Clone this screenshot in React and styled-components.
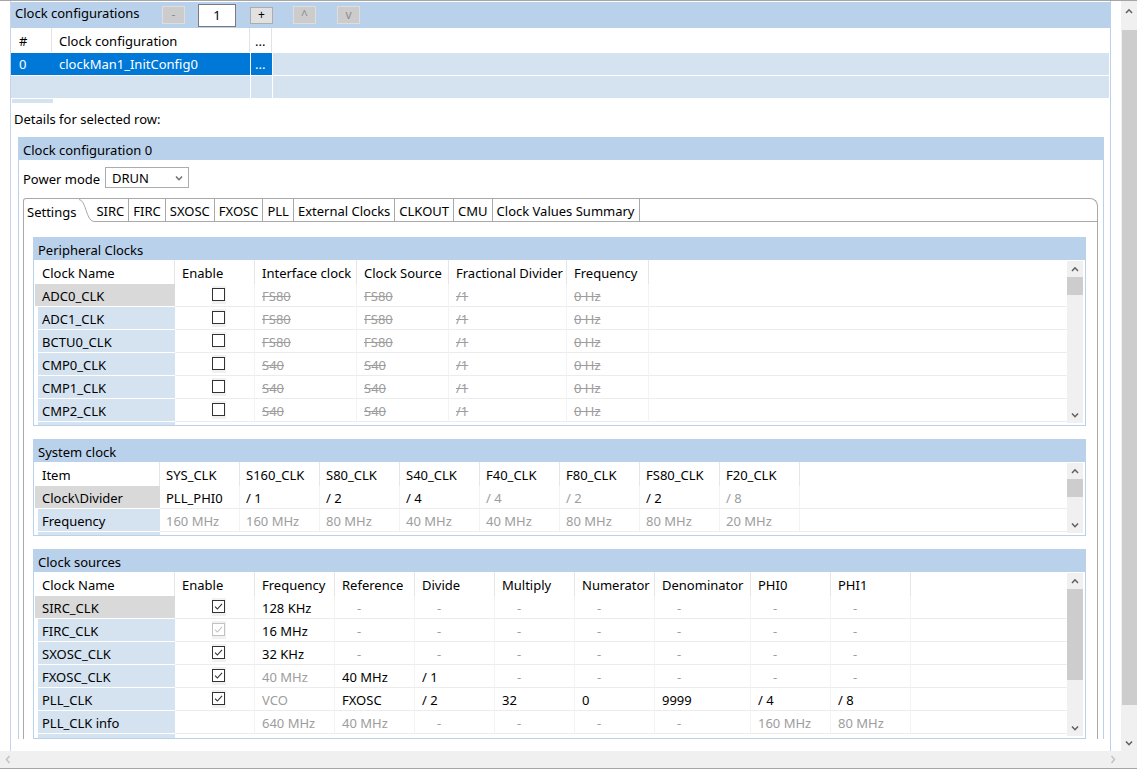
import React from 'react';
import styled, { createGlobalStyle } from 'styled-components';

const BAND = '#b9d1ea';
const ROWBLUE = '#d5e3f1';
const SELGRAY = '#d9d9d9';
const GRAYTXT = '#9d9d9d';
const FRAME = '#a9a9a9';

const GlobalStyle = createGlobalStyle`
  html, body { margin: 0; padding: 0; background: #fff; }
  body {
    font-family: "Noto Sans", "Liberation Sans", Arial, sans-serif;
    font-size: 13px;
    color: #000;
  }
  *, *::before, *::after { box-sizing: border-box; }
`;

const Window = styled.div`
  width: 1137px;
  height: 769px;
  display: grid;
  grid-template-columns: 1121px 16px;
  grid-template-rows: 750px 17px;
  border-top: 1px solid #a5a5a5;
  border-bottom: 1px solid #a5a5a5;
  overflow: hidden;
`;

const Main = styled.div`
  overflow: hidden;
  padding-left: 10px;
`;

const Outer = styled.div`
  width: 1101px;
  min-height: 100%;
  padding-top: 1px;
  border-left: 1px solid #c6d6e8;
  border-right: 1px solid ${BAND};
`;

/* ---- top toolbar ---- */
const HeaderBand = styled.div`
  height: 26px;
  background: ${BAND};
  display: flex;
  align-items: center;
`;

const HeaderTitle = styled.div`
  width: 151px;
  padding-left: 4px;
  align-self: flex-start;
  line-height: 22px;
  white-space: nowrap;
`;

const ToolButton = styled.div`
  width: 23px;
  height: ${p => (p.$off ? 18 : 17)}px;
  margin-left: ${p => p.$ml || 0}px;
  display: flex;
  align-items: center;
  justify-content: center;
  background: ${p => (p.$off ? '#cccccc' : '#e1e1e1')};
  border: 1px solid ${p => (p.$off ? '#dedede' : '#adadad')};
  color: ${p => (p.$off ? '#8c8c8c' : '#000')};
  font-size: 12px;
  line-height: 1;
`;

const CountInput = styled.div`
  width: 38px;
  height: 23px;
  margin-left: 13px;
  background: #fff;
  border: 1px solid #7a7a7a;
  display: flex;
  align-items: center;
  justify-content: center;
`;

/* ---- configuration list ---- */
const ConfigHead = styled.div`
  display: grid;
  grid-template-columns: 41px 198px 22px 1fr;
  height: 24px;
  background: #fff;
`;

const ConfigHeadCell = styled.div`
  display: flex;
  align-items: center;
  padding: 2px 0 0 ${p => p.$pl || 0}px;
  border-right: ${p => (p.$last ? 'none' : '1px solid #e3e3e3')};
`;

const ConfigRow = styled.div`
  display: grid;
  grid-template-columns: 41px 198px 22px 1fr;
  height: 22px;
  margin: 1px 1px 0 0;
`;

const ConfigCell = styled.div`
  display: flex;
  align-items: center;
  padding-left: ${p => p.$pl || 0}px;
  background: ${p => (p.$sel ? '#0078d7' : ROWBLUE)};
  color: ${p => (p.$sel ? '#fff' : '#000')};
  border-left: ${p => (p.$sep ? '1px solid #fff' : 'none')};
`;

const StubBar = styled.div`
  width: 41px;
  height: 4px;
  margin: 1px 0 0 1px;
  background: ${ROWBLUE};
`;

const DetailsLabel = styled.div`
  height: 30px;
  display: flex;
  align-items: center;
  padding: 2px 0 0 3px;
`;

/* ---- group ---- */
const Group = styled.div`
  margin: 4px 6px 0 7px;
  border-left: 1px solid ${BAND};
  border-right: 1px solid ${BAND};
`;

const Band = styled.div`
  height: ${p => p.$h}px;
  background: ${BAND};
  display: flex;
  align-items: center;
  padding: 2px 0 0 4px;
`;

const PowerRow = styled.div`
  margin-top: 7px;
  height: 21px;
  display: flex;
  align-items: center;
  padding-left: 4px;
`;

const PowerLabel = styled.div`
  width: 82px;
  padding-top: 2px;
`;

const Combo = styled.div`
  width: 84px;
  height: 21px;
  border: 1px solid #acacac;
  background: #fff;
  display: flex;
  align-items: center;
  justify-content: space-between;
  padding: 1px 5px 0 6px;
`;

/* ---- tab folder ---- */
const TabFolder = styled.div`
  margin: 10px 5px 0 4px;
  border: 1px solid ${FRAME};
  border-bottom: none;
  border-radius: 3px 8px 0 0;
  background: #fff;
`;

const TabStrip = styled.div`
  display: flex;
  height: 23px;
`;

const ActiveTab = styled.div`
  display: flex;
  align-items: center;
  padding: 2px 3px 0 3px;
`;

const Tab = styled.div`
  display: flex;
  align-items: center;
  padding: 2px 4px 0 ${p => p.$pl || 4}px;
  border-right: 1px solid ${FRAME};
  border-bottom: 1px solid ${FRAME};
  white-space: nowrap;
`;

const TabFill = styled.div`
  flex: 1;
  border-bottom: 1px solid ${FRAME};
`;

const TabBody = styled.div`
  padding: 15px 11px 0 9px;
`;

/* ---- sections with tables ---- */
const Section = styled.div`
  border: 1px solid ${BAND};
  margin-bottom: 13px;
`;

const SectionBody = styled.div`
  display: flex;
  height: ${p => p.$h}px;
  background: #fff;
`;

const GridArea = styled.div`
  flex: 1;
  display: flex;
  flex-direction: column;
  overflow: hidden;
`;

const GRow = styled.div`
  display: grid;
  grid-template-columns: ${p => p.$cols} 1fr;
  height: ${p => p.$h || 23}px;
  flex-shrink: 0;
`;

const PartialRow = styled.div`
  display: grid;
  grid-template-columns: ${p => p.$cols} 1fr;
  flex: 1;
`;

const HeadCell = styled.div`
  display: flex;
  align-items: center;
  padding: 2px 0 0 ${p => p.$pl}px;
  border-right: 1px solid #e6e6e6;
  white-space: nowrap;
`;

const NameCell = styled.div`
  display: flex;
  align-items: center;
  margin-left: ${p => (p.$sel ? 1 : 4)}px;
  padding: 2px 0 0 ${p => (p.$sel ? 7 : 4)}px;
  background: ${p => (p.$sel ? SELGRAY : ROWBLUE)};
  border-bottom: ${p => (p.$open ? 'none' : '1px solid #fff')};
  white-space: nowrap;
`;

const ValCell = styled.div`
  display: flex;
  align-items: center;
  padding: 2px 0 0 ${p => p.$pl}px;
  border-bottom: 1px solid #ececec;
  border-right: 1px solid #f3f3f3;
  color: ${p => (p.$tone === 'ink' ? '#000' : GRAYTXT)};
  text-decoration: ${p => (p.$tone === 'strike' ? 'line-through' : 'none')};
  white-space: nowrap;
`;

const RowFill = styled.div`
  border-bottom: 1px solid #ececec;
`;

const CheckWell = styled.div`
  width: 14px;
  height: 18px;
  margin: 2px 0 0 37px;
  background: #f1f1f1;
  align-self: flex-start;
  padding-top: 2px;
`;

const CheckBox = styled.div`
  width: 13px;
  height: 13px;
  border: 1px solid ${p => (p.$dis ? '#c2c2c2' : '#333')};
  background: #fff;
  display: flex;
  align-items: center;
  justify-content: center;
`;

const CheckCell = styled.div`
  display: flex;
  border-bottom: 1px solid #ececec;
  border-right: 1px solid #f3f3f3;
`;

/* ---- scrollbars ---- */
const VScroll = styled.div`
  width: 16px;
  margin: 1px 2px 2px 0;
  background: #f0f0f0;
  display: flex;
  flex-direction: column;
`;

const ArrowBox = styled.div`
  height: 16px;
  display: flex;
  align-items: center;
  justify-content: center;
  flex-shrink: 0;
`;

const Thumb = styled.div`
  height: ${p => p.$h}px;
  background: #cdcdcd;
  flex-shrink: 0;
  margin-left: ${p => p.$ml || 0}px;
`;

const Track = styled.div`
  flex: 1;
`;

const MainVScroll = styled.div`
  grid-column: 2;
  grid-row: 1;
  background: #f0f0f0;
  display: flex;
  flex-direction: column;
`;

const MainTop = styled.div`
  height: 29px;
  display: flex;
  justify-content: center;
  padding-top: 7px;
`;

const MainBottom = styled.div`
  flex: 1;
  display: flex;
  justify-content: center;
  align-items: flex-end;
  padding-bottom: 5px;
`;

const HScroll = styled.div`
  grid-column: 1 / -1;
  grid-row: 2;
  background: #f0f0f0;
  display: flex;
  align-items: center;
  justify-content: space-between;
  padding: 0 21px 0 5px;
`;

const Chevron = ({ dir, color = '#606060' }) => {
  const paths = {
    up: 'M1 5 L4 1.8 L7 5',
    down: 'M1 1.5 L4 4.7 L7 1.5',
    left: 'M4.5 1 L1.5 4.5 L4.5 8',
    right: 'M1.5 1 L4.5 4.5 L1.5 8',
  };
  const vertical = dir === 'up' || dir === 'down';
  return (
    <svg width={vertical ? 8 : 6} height={vertical ? 6 : 9} viewBox={vertical ? '0 0 8 6' : '0 0 6 9'}>
      <path d={paths[dir]} fill="none" stroke={color} strokeWidth="1.5" />
    </svg>
  );
};

const ScrollBar = ({ thumb }) => (
  <VScroll>
    <ArrowBox><Chevron dir="up" /></ArrowBox>
    <Thumb $h={thumb} />
    <Track />
    <ArrowBox><Chevron dir="down" /></ArrowBox>
  </VScroll>
);

const Check = ({ state }) => (
  <CheckCell>
    {state !== 'none' && (
      <CheckWell>
        <CheckBox $dis={state === 'dis'}>
          {(state === 'on' || state === 'dis') && (
            <svg width="11" height="11" viewBox="0 0 11 11">
              <path d="M2 5.6 L4.4 8 L9 2.8" fill="none" stroke={state === 'dis' ? '#c2c2c2' : '#333'} strokeWidth="1.1" />
            </svg>
          )}
        </CheckBox>
      </CheckWell>
    )}
  </CheckCell>
);

const parse = v => {
  if (v === '-') return { t: '-', tone: 'gray', dash: true };
  if (v.startsWith('g:')) return { t: v.slice(2), tone: 'gray' };
  if (v.startsWith('s:')) return { t: v.slice(2), tone: 'strike' };
  return { t: v, tone: 'ink' };
};

const DataTable = ({ title, cols, head, rows, height, thumb, pad = 7 }) => (
  <Section>
    <Band $h={22}>{title}</Band>
    <SectionBody $h={height}>
      <GridArea>
        <GRow $cols={cols} $h={24}>
          {head.map((h, i) => (
            <HeadCell key={h} $pl={i === 0 ? 8 : pad}>{h}</HeadCell>
          ))}
          <div />
        </GRow>
        {rows.map(r => (
          <GRow key={r.name} $cols={cols}>
            <NameCell $sel={r.sel}>{r.name}</NameCell>
            {r.check && <Check state={r.check} />}
            {r.cells.map((c, i) => {
              const v = parse(c);
              return (
                <ValCell key={i} $tone={v.tone} $pl={v.dash ? 22 : pad}>{v.t}</ValCell>
              );
            })}
            <RowFill />
          </GRow>
        ))}
        <PartialRow $cols={cols}>
          <NameCell $open />
        </PartialRow>
      </GridArea>
      <ScrollBar thumb={thumb} />
    </SectionBody>
  </Section>
);

const peripheralRows = [
  { name: 'ADC0_CLK', sel: true, check: 'off', cells: ['s:FS80', 's:FS80', 's:/1', 's:0 Hz'] },
  { name: 'ADC1_CLK', check: 'off', cells: ['s:FS80', 's:FS80', 's:/1', 's:0 Hz'] },
  { name: 'BCTU0_CLK', check: 'off', cells: ['s:FS80', 's:FS80', 's:/1', 's:0 Hz'] },
  { name: 'CMP0_CLK', check: 'off', cells: ['s:S40', 's:S40', 's:/1', 's:0 Hz'] },
  { name: 'CMP1_CLK', check: 'off', cells: ['s:S40', 's:S40', 's:/1', 's:0 Hz'] },
  { name: 'CMP2_CLK', check: 'off', cells: ['s:S40', 's:S40', 's:/1', 's:0 Hz'] },
];

const systemRows = [
  { name: 'Clock\\Divider', sel: true, cells: ['PLL_PHI0', '/ 1', '/ 2', '/ 4', 'g:/ 4', 'g:/ 2', '/ 2', 'g:/ 8'] },
  { name: 'Frequency', cells: ['g:160 MHz', 'g:160 MHz', 'g:80 MHz', 'g:40 MHz', 'g:40 MHz', 'g:80 MHz', 'g:80 MHz', 'g:20 MHz'] },
];

const sourceRows = [
  { name: 'SIRC_CLK', sel: true, check: 'on', cells: ['128 KHz', '-', '-', '-', '-', '-', '-', '-'] },
  { name: 'FIRC_CLK', check: 'dis', cells: ['16 MHz', '-', '-', '-', '-', '-', '-', '-'] },
  { name: 'SXOSC_CLK', check: 'on', cells: ['32 KHz', '-', '-', '-', '-', '-', '-', '-'] },
  { name: 'FXOSC_CLK', check: 'on', cells: ['g:40 MHz', '40 MHz', '/ 1', '-', '-', '-', '-', '-'] },
  { name: 'PLL_CLK', check: 'on', cells: ['g:VCO', 'FXOSC', '/ 2', '32', '0', '9999', '/ 4', '/ 8'] },
  { name: 'PLL_CLK info', check: 'none', cells: ['g:640 MHz', 'g:40 MHz', '-', '-', '-', '-', 'g:160 MHz', 'g:80 MHz'] },
];

const tabs = ['SIRC', 'FIRC', 'SXOSC', 'FXOSC', 'PLL', 'External Clocks', 'CLKOUT', 'CMU', 'Clock Values Summary'];

export default function App() {
  return (
    <>
      <GlobalStyle />
      <Window>
        <Main>
          <Outer>
            <HeaderBand>
              <HeaderTitle>Clock configurations</HeaderTitle>
              <ToolButton $off>-</ToolButton>
              <CountInput>1</CountInput>
              <ToolButton $ml={14}>+</ToolButton>
              <ToolButton $off $ml={20}>^</ToolButton>
              <ToolButton $off $ml={21}>v</ToolButton>
            </HeaderBand>

            <ConfigHead>
              <ConfigHeadCell $pl={8}>#</ConfigHeadCell>
              <ConfigHeadCell $pl={7}>Clock configuration</ConfigHeadCell>
              <ConfigHeadCell $pl={5}>...</ConfigHeadCell>
              <ConfigHeadCell $last />
            </ConfigHead>
            <ConfigRow>
              <ConfigCell $sel $pl={8}>0</ConfigCell>
              <ConfigCell $sel $pl={7}>clockMan1_InitConfig0</ConfigCell>
              <ConfigCell $sel $sep $pl={4}>...</ConfigCell>
              <ConfigCell $sep />
            </ConfigRow>
            <ConfigRow>
              <ConfigCell />
              <ConfigCell />
              <ConfigCell $sep />
              <ConfigCell $sep />
            </ConfigRow>
            <StubBar />

            <DetailsLabel>Details for selected row:</DetailsLabel>

            <Group>
              <Band $h={23}>Clock configuration 0</Band>
              <PowerRow>
                <PowerLabel>Power mode</PowerLabel>
                <Combo>
                  <span>DRUN</span>
                  <Chevron dir="down" color="#707070" />
                </Combo>
              </PowerRow>

              <TabFolder>
                <TabStrip>
                  <ActiveTab>Settings</ActiveTab>
                  <svg width="15" height="23" viewBox="0 0 15 23">
                    <path d="M0 0.5 C7 0.5 7 22.5 15 22.5" fill="none" stroke={FRAME} strokeWidth="1" />
                  </svg>
                  {tabs.map((t, i) => (
                    <Tab key={t} $pl={i === 0 ? 2 : 4}>{t}</Tab>
                  ))}
                  <TabFill />
                </TabStrip>
                <TabBody>
                  <DataTable
                    title="Peripheral Clocks"
                    cols="141px 80px 102px 92px 118px 82px"
                    head={['Clock Name', 'Enable', 'Interface clock', 'Clock Source', 'Fractional Divider', 'Frequency']}
                    rows={peripheralRows}
                    height={165}
                    thumb={18}
                  />
                  <DataTable
                    title="System clock"
                    cols="126px repeat(8, 80px)"
                    head={['Item', 'SYS_CLK', 'S160_CLK', 'S80_CLK', 'S40_CLK', 'F40_CLK', 'F80_CLK', 'FS80_CLK', 'F20_CLK']}
                    rows={systemRows}
                    height={73}
                    thumb={18}
                    pad={6}
                  />
                  <DataTable
                    title="Clock sources"
                    cols="141px 80px 80px 80px 80px 80px 80px 96px 80px 80px"
                    head={['Clock Name', 'Enable', 'Frequency', 'Reference', 'Divide', 'Multiply', 'Numerator', 'Denominator', 'PHI0', 'PHI1']}
                    rows={sourceRows}
                    height={166}
                    thumb={91}
                  />
                </TabBody>
              </TabFolder>
            </Group>
          </Outer>
        </Main>

        <MainVScroll>
          <MainTop><Chevron dir="up" /></MainTop>
          <Thumb $h={675} $ml={1} />
          <MainBottom><Chevron dir="down" /></MainBottom>
        </MainVScroll>

        <HScroll>
          <Chevron dir="left" color="#c2c2c2" />
          <Chevron dir="right" color="#c2c2c2" />
        </HScroll>
      </Window>
    </>
  );
}
